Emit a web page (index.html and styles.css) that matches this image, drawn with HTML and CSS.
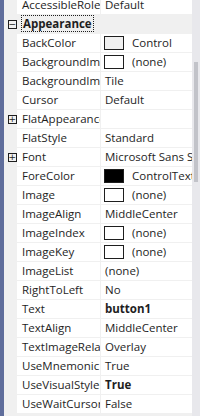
FILE: index.html
```html
<!DOCTYPE html>
<html>
<head>
    <title>Properties</title>
    <link rel="stylesheet" href="styles.css">
</head>
<body>
    <div class="grid">
        <div class="rows">
            <div class="row"><div class="margin"></div><div class="name">AccessibleRole</div><div class="value">Default</div></div>
            <div class="row category"><div class="margin"><span class="toggle">&minus;</span></div><div class="cat-label"><span class="focus">Appearance</span></div></div>
            <div class="row"><div class="margin"></div><div class="name">BackColor</div><div class="value"><span class="swatch control"></span>Control</div></div>
            <div class="row"><div class="margin"></div><div class="name">BackgroundImage</div><div class="value"><span class="swatch"></span>(none)</div></div>
            <div class="row"><div class="margin"></div><div class="name">BackgroundImageLayout</div><div class="value">Tile</div></div>
            <div class="row"><div class="margin"></div><div class="name">Cursor</div><div class="value">Default</div></div>
            <div class="row"><div class="margin"><span class="toggle">+</span></div><div class="name">FlatAppearance</div><div class="value"></div></div>
            <div class="row"><div class="margin"></div><div class="name">FlatStyle</div><div class="value">Standard</div></div>
            <div class="row"><div class="margin"><span class="toggle">+</span></div><div class="name">Font</div><div class="value">Microsoft Sans Serif, 8.25pt</div></div>
            <div class="row"><div class="margin"></div><div class="name">ForeColor</div><div class="value"><span class="swatch black"></span>ControlText</div></div>
            <div class="row"><div class="margin"></div><div class="name">Image</div><div class="value"><span class="swatch"></span>(none)</div></div>
            <div class="row"><div class="margin"></div><div class="name">ImageAlign</div><div class="value">MiddleCenter</div></div>
            <div class="row"><div class="margin"></div><div class="name">ImageIndex</div><div class="value"><span class="swatch"></span>(none)</div></div>
            <div class="row"><div class="margin"></div><div class="name">ImageKey</div><div class="value"><span class="swatch"></span>(none)</div></div>
            <div class="row"><div class="margin"></div><div class="name">ImageList</div><div class="value">(none)</div></div>
            <div class="row"><div class="margin"></div><div class="name">RightToLeft</div><div class="value">No</div></div>
            <div class="row"><div class="margin"></div><div class="name">Text</div><div class="value bold">button1</div></div>
            <div class="row"><div class="margin"></div><div class="name">TextAlign</div><div class="value">MiddleCenter</div></div>
            <div class="row"><div class="margin"></div><div class="name">TextImageRelation</div><div class="value">Overlay</div></div>
            <div class="row"><div class="margin"></div><div class="name">UseMnemonic</div><div class="value">True</div></div>
            <div class="row"><div class="margin"></div><div class="name">UseVisualStyleBackColor</div><div class="value bold">True</div></div>
            <div class="row"><div class="margin"></div><div class="name">UseWaitCursor</div><div class="value">False</div></div>
        </div>
        <div class="scrollbar"><div class="thumb"></div></div>
    </div>
</body>
</html>
```

FILE: styles.css
```css
body {
    margin: 0;
    overflow: hidden;
    background: #f0f0f0;
    font-family: "Open Sans", "Noto Sans", sans-serif;
    font-size: 11.5px;
    color: #1e1e1e;
}
.grid {
    display: flex;
    height: 416px;
    overflow: hidden;
}
.rows {
    width: 188px;
    margin-top: -4px;
    border-left: 4px solid #5f6d9b;
    background: #f0f0f0;
}
.row {
    display: flex;
    height: 18px;
    border-bottom: 1px solid #f0f0f0;
    line-height: 18px;
}
.margin {
    width: 13px;
    flex: none;
    display: flex;
    align-items: center;
    justify-content: center;
    background: #f0f0f0;
}
.toggle {
    width: 7px;
    height: 7px;
    border: 1px solid #1e1e1e;
    font-size: 9px;
    line-height: 7px;
    text-align: center;
    font-family: "DejaVu Sans", sans-serif;
    margin-left: 3px;
}
.name {
    width: 78px;
    flex: none;
    padding-left: 5px;
    background: #ffffff;
    border-right: 1px solid #f0f0f0;
    white-space: nowrap;
    overflow: hidden;
}
.value {
    flex: 1;
    padding-left: 4px;
    background: #ffffff;
    white-space: nowrap;
    overflow: hidden;
    display: flex;
    align-items: center;
}
.bold {
    font-weight: bold;
}
.category .cat-label {
    flex: 1;
    padding-left: 5px;
    font-weight: bold;
}
.focus {
    outline: 1px dotted #1e1e1e;
    padding: 0 1px;
}
.swatch {
    width: 18px;
    height: 12px;
    border: 1px solid #1e1e1e;
    background: #ffffff;
    margin-right: 8px;
    margin-left: -1px;
    flex: none;
}
.swatch.control {
    background: #f0f0f0;
}
.swatch.black {
    background: #000000;
}
.scrollbar {
    width: 12px;
    background: #e8e8ec;
    position: relative;
}
.thumb {
    margin: 62px 2px 0 2px;
    height: 120px;
    background: #c2c3c9;
}
```
